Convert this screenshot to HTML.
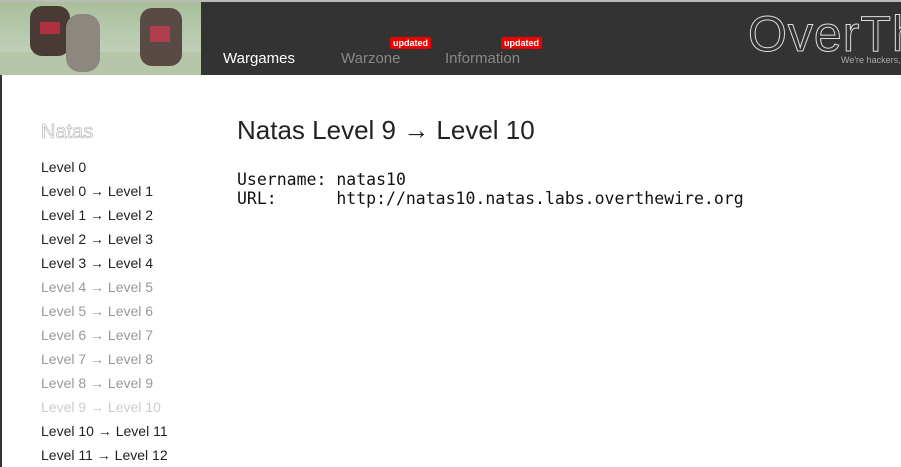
<!DOCTYPE html>
<html><head><meta charset="utf-8"><style>
*{margin:0;padding:0;box-sizing:border-box}
body{width:901px;height:467px;overflow:hidden;background:#fff;font-family:"Liberation Sans",sans-serif;position:relative}
.top{position:absolute;left:0;top:0;width:901px;height:2px;background:#bbb}
.hdr{position:absolute;left:0;top:2px;width:901px;height:73px;background:#333}
.ban{position:absolute;left:0;top:2px;width:201px;height:73px;background:linear-gradient(180deg,#a9bf9a 0%,#b9cbb0 50%,#c6d2bf 80%,#d0d8c8 100%);overflow:hidden}
.ban div{position:absolute}
.nav{position:absolute;top:50px;font-size:15px;color:#888}
.badge{position:absolute;top:37px;height:12px;background:#e00;color:#fff;font-size:9px;font-weight:bold;line-height:12px;padding:0 3px;border-radius:2px}
.logo{position:absolute;left:748px;top:5px;font-size:50px;color:transparent;-webkit-text-stroke:1px #ddd;letter-spacing:1px;white-space:nowrap;font-weight:300}
.tag{position:absolute;left:841px;top:55px;font-size:9px;color:#aaa;white-space:nowrap}
.side{position:absolute;left:41px;top:121px}
.side h3{font-size:20px;font-weight:normal;color:transparent;-webkit-text-stroke:0.6px #aaa;height:34px}
.side a{display:block;font-size:14px;line-height:24px;color:#222;text-decoration:none;white-space:nowrap}
.g{color:#999!important}.l{color:#ccc!important}
h1{position:absolute;left:237px;top:115px;font-size:26px;font-weight:normal;color:#222}
pre{position:absolute;left:237px;top:170px;font-family:"DejaVu Sans Mono",monospace;font-size:16.5px;line-height:19px;color:#111}
.lb{position:absolute;left:0;top:75px;width:2px;height:392px;background:#333}
</style></head><body>
<div class="top"></div>
<div class="hdr"></div>
<div class="ban">
<div style="left:0;top:50px;width:201px;height:23px;background:#b7c6a8"></div>
<div style="left:30px;top:4px;width:40px;height:50px;background:#4a3a35;border-radius:12px"></div>
<div style="left:40px;top:20px;width:20px;height:12px;background:#b03040"></div>
<div style="left:140px;top:6px;width:42px;height:58px;background:#5a4a45;border-radius:12px"></div>
<div style="left:150px;top:24px;width:20px;height:16px;background:#b04050"></div>
<div style="left:66px;top:12px;width:34px;height:58px;background:#8c8880;border-radius:14px"></div>
</div>
<div class="lb"></div>
<div class="nav" style="left:223px;color:#fff">Wargames</div>
<div class="nav" style="left:341px">Warzone</div>
<div class="nav" style="left:445px">Information</div>
<div class="badge" style="left:390px">updated</div>
<div class="badge" style="left:501px">updated</div>
<div class="logo">OverTh</div>
<div class="tag">We're hackers,</div>
<div class="side"><h3>Natas</h3>
<a>Level 0</a><a>Level 0 → Level 1</a><a>Level 1 → Level 2</a><a>Level 2 → Level 3</a><a>Level 3 → Level 4</a>
<a class="g">Level 4 → Level 5</a><a class="g">Level 5 → Level 6</a><a class="g">Level 6 → Level 7</a><a class="g">Level 7 → Level 8</a><a class="g">Level 8 → Level 9</a>
<a class="l">Level 9 → Level 10</a><a>Level 10 → Level 11</a><a>Level 11 → Level 12</a>
</div>
<h1>Natas Level 9 → Level 10</h1>
<pre>Username: natas10
URL:      http://natas10.natas.labs.overthewire.org</pre>
</body></html>
